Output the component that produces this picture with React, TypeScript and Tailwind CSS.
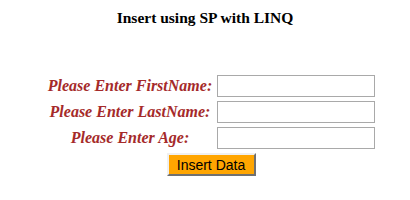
export default function App() {
  const rows = ['Please Enter FirstName:', 'Please Enter LastName:', 'Please Enter Age:'];
  return (
    <div className="w-[410px] h-[200px] bg-white" style={{ fontFamily: '"Liberation Serif", serif' }}>
      <div className="pt-[9px] text-center text-[15.5px] font-bold text-black leading-[18px]">Insert using SP with LINQ</div>
      <div className="mt-[48px] flex flex-col items-center">
        <div className="grid grid-cols-[170px_158px] gap-x-[2px] gap-y-[4px] ml-[10px]">
          {rows.map((r) => (
            <div key={r} className="contents">
              <div className="flex items-center justify-center whitespace-nowrap text-[16px] font-bold italic text-[#a52a2a] leading-[22px]">{r}</div>
              <input className="h-[22px] w-[158px] border border-[#a9a9a9] bg-white outline-none" />
            </div>
          ))}
        </div>
        <button
          className="mt-[4px] ml-[12px] h-[23px] w-[89px] bg-[#ffa500] text-black text-[14px] font-medium border-2 border-t-[#f0f0f0] border-l-[#f0f0f0] border-b-[#707070] border-r-[#707070] leading-none"
          style={{ fontFamily: '"Liberation Sans", Arial, sans-serif' }}
        >
          Insert Data
        </button>
      </div>
    </div>
  );
}
